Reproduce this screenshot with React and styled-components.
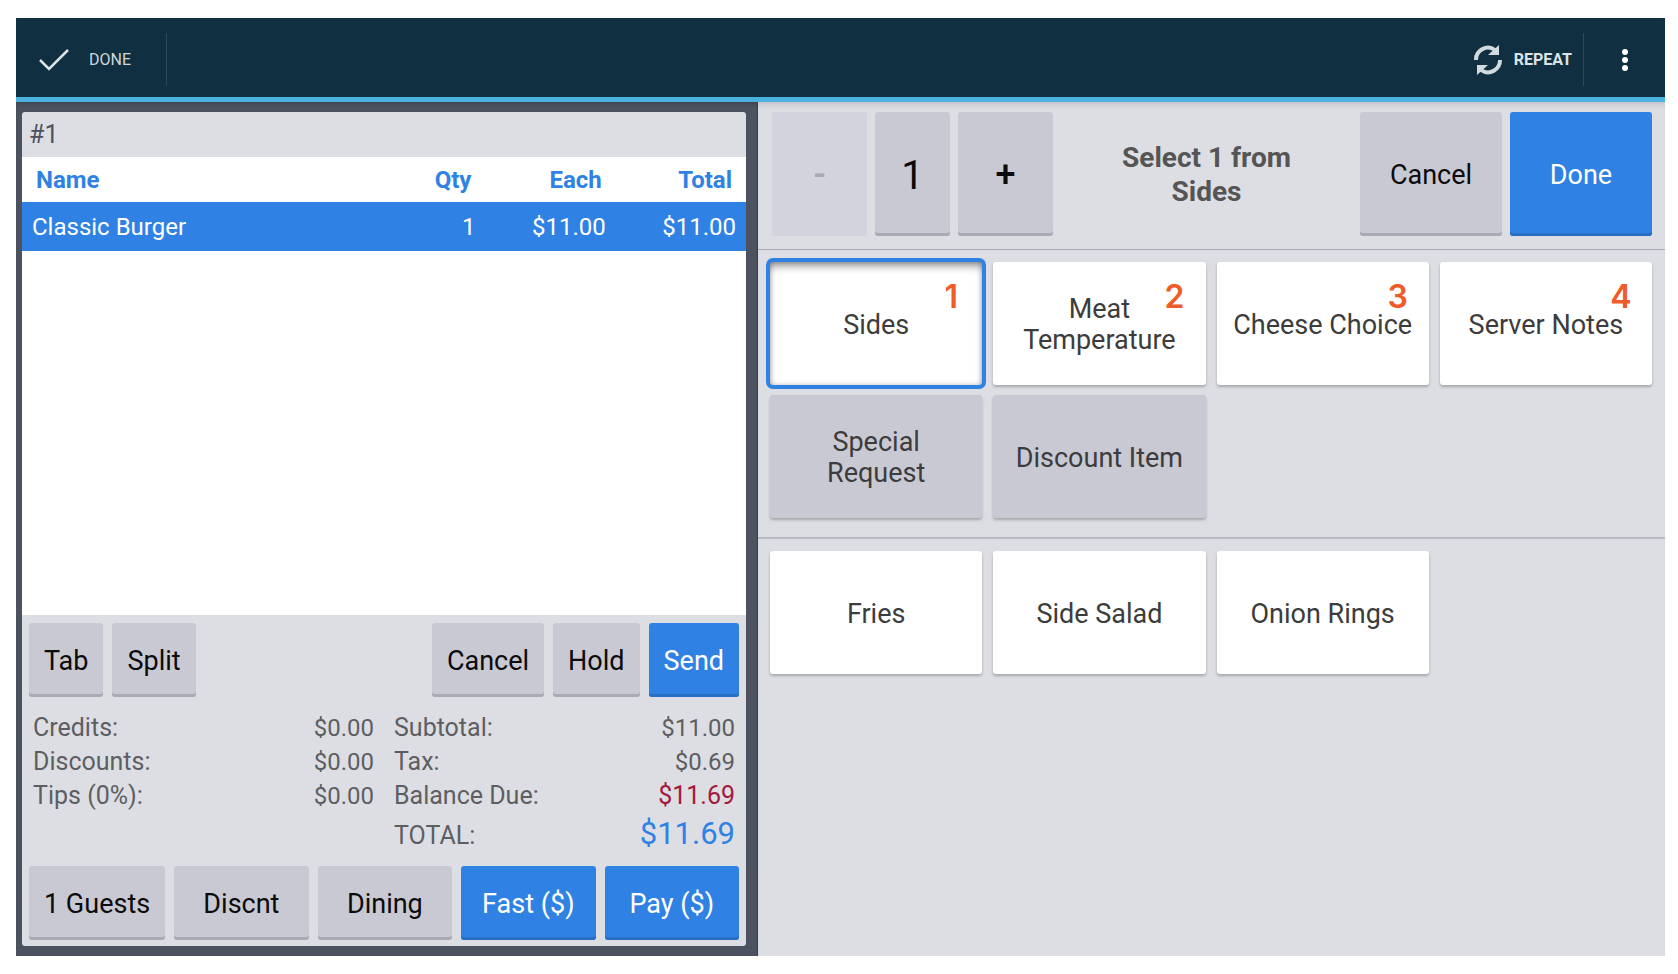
import React from 'react'
import styled, { createGlobalStyle, css } from 'styled-components'

const GlobalStyle = createGlobalStyle`
  * {
    box-sizing: border-box;
  }
  body {
    margin: 0;
    background: #fff;
    font-family: Roboto, "Liberation Sans", sans-serif;
  }
  button {
    font-family: inherit;
    border: none;
    padding: 0;
    cursor: pointer;
  }
`

const Screen = styled.div`
  display: flex;
  flex-direction: column;
  min-height: calc(100vh - 36px);
  margin: 18px 13px 18px 16px;
`

const TopBar = styled.header`
  display: flex;
  justify-content: space-between;
  align-items: center;
  height: 84px;
  padding-top: 4px;
  background: #102f40;
  border-bottom: 5px solid #4bb2e0;
`

const BarGroup = styled.div`
  display: flex;
  align-items: center;
`

const BarButton = styled.button`
  display: flex;
  align-items: center;
  gap: ${props => props.$gap}px;
  height: 53px;
  padding: ${props => props.$padding};
  background: none;
  color: ${props => props.$color};
  font-size: 16px;
  font-weight: ${props => (props.$strong ? 700 : 400)};
`

const BarDivider = styled.span`
  width: 1px;
  height: 53px;
  background: #2b4b5a;
`

const Columns = styled.div`
  flex: 1;
  display: grid;
  grid-template-columns: 45fr 55fr;
`

const TicketPane = styled.section`
  display: flex;
  padding: 10px 12px 10px 6px;
  background: #4d5260;
  box-shadow: inset 0 4px 4px -2px rgba(0, 0, 0, 0.2), inset -1px 0 0 #3c404c;
`

const Ticket = styled.div`
  flex: 1;
  display: flex;
  flex-direction: column;
  overflow: hidden;
  border-radius: 3px;
  background: #dddee3;
`

const TicketNumber = styled.h1`
  margin: 0;
  padding: 0 7px;
  font-size: 25px;
  font-weight: 400;
  line-height: 45px;
  color: #4d5260;
`

const Lines = styled.div`
  flex: 1;
  background: #fff;
`

const LineTable = styled.table`
  width: 100%;
  table-layout: fixed;
  border-collapse: collapse;
  font-size: 24px;
`

const HeadCell = styled.th`
  width: ${props => props.$width};
  height: 45px;
  padding: 1px 14px 0;
  text-align: ${props => props.$align || 'right'};
  font-weight: 700;
  color: #2f82e3;
`

const LineCell = styled.td`
  height: 49px;
  padding: 1px 10px 0;
  text-align: ${props => props.$align || 'right'};
  color: #fff;
  background: #2f82e3;
`

const Footer = styled.footer`
  padding: 8px 7px 6px;
`

const ButtonRow = styled.div`
  display: flex;
  gap: 9px;
`

const EqualRow = styled.div`
  display: grid;
  grid-template-columns: repeat(5, 1fr);
  gap: 9px;
`

const Spacer = styled.span`
  flex: 1;
`

const PosButton = styled.button`
  height: 74px;
  padding: 2px 15px 0;
  border-radius: 3px;
  font-size: 27px;
  white-space: nowrap;
  color: #0b0b0b;
  background: #c9c9d3;
  box-shadow: inset 0 -3px 0 #aaaab4;
  ${props => props.$primary && css`
    color: #fff;
    background: #2f82e3;
    box-shadow: inset 0 -3px 0 #2870c6;
  `}
`

const Summary = styled.div`
  display: grid;
  grid-template-columns: 1fr 1fr;
  gap: 20px;
  margin: 14px 4px 5px;
`

const SummaryList = styled.dl`
  margin: 0;
`

const SummaryLine = styled.div`
  display: flex;
  justify-content: space-between;
  align-items: baseline;
  height: 34px;
  font-size: 25px;
  line-height: 34px;
  color: #5d5e62;
`

const TotalLine = styled(SummaryLine)`
  height: 48px;
  line-height: 42px;
`

const Amount = styled.dd`
  margin: 0;
  color: ${props => props.$color || 'inherit'};
  font-size: ${props => props.$size || 24}px;
`

const OptionsPane = styled.main`
  background: #dddee3;
  box-shadow: inset 0 6px 6px -4px rgba(0, 0, 0, 0.15);
`

const OptionsHead = styled.div`
  display: flex;
  gap: 8px;
  padding: 10px 13px 13px 14px;
  border-bottom: 1px solid #a9aab3;
`

const HeadButton = styled(PosButton)`
  flex: none;
  width: ${props => props.$width}px;
  height: 124px;
  font-size: ${props => props.$size || 27}px;
  font-weight: ${props => (props.$strong ? 500 : 400)};
  &:disabled {
    color: #a9a9ae;
    background: #d3d3dd;
    box-shadow: none;
  }
`

const Prompt = styled.h2`
  flex: 1;
  align-self: center;
  margin: 0;
  padding: 2px 48px 0;
  text-align: center;
  font-size: 28px;
  font-weight: 700;
  line-height: 34px;
  color: #555;
`

const TileGrid = styled.div`
  display: grid;
  grid-template-columns: repeat(4, 1fr);
  gap: 10px 11px;
  padding: 12px 13px 19px 12px;
  border-bottom: ${props => (props.$divided ? '2px solid #b9bac4' : 'none')};
`

const Tile = styled.button`
  position: relative;
  height: 123px;
  padding: 3px 16px 0;
  border-radius: 3px;
  font-size: 27px;
  line-height: 31px;
  color: #3c3c3c;
  background: ${props => (props.$muted ? '#c9c9d3' : '#fff')};
  box-shadow: 0 2px 3px rgba(0, 0, 0, 0.25);
  ${props => props.$selected && css`
    box-shadow: 0 0 0 4px #2f82e3, inset 0 6px 8px -2px rgba(0, 0, 0, 0.4),
      inset 0 0 5px rgba(0, 0, 0, 0.25);
  `}
`

const Step = styled.span`
  position: absolute;
  top: 23px;
  right: 20px;
  width: 22px;
  text-align: center;
  font-family: Inter, Roboto, sans-serif;
  font-size: 32px;
  font-weight: 600;
  line-height: 24px;
  color: #f15a29;
`

const CheckIcon = () => (
  <svg width="30" height="24" viewBox="0 0 30 24" fill="none" stroke="#dde3e6" strokeWidth="2.5">
    <path d="M1 12 L10 21 L29 2" />
  </svg>
)

const RepeatIcon = () => (
  <svg width="30" height="32" viewBox="0 0 30 32">
    <g id="half">
      <path d="M3 16 A12 12 0 0 1 22 6" fill="none" stroke="#d3dadd" strokeWidth="4" />
      <path d="M26 1 V11 H15 Z" fill="#d3dadd" />
    </g>
    <use href="#half" transform="rotate(180 15 16)" />
  </svg>
)

const MoreIcon = () => (
  <svg width="6" height="22" viewBox="0 0 6 22" fill="#fff">
    <circle cx="3" cy="3" r="3" />
    <circle cx="3" cy="11" r="3" />
    <circle cx="3" cy="19" r="3" />
  </svg>
)

const lines = [
  { name: 'Classic Burger', qty: 1, each: '$11.00', total: '$11.00' }
]

const groups = [
  { label: 'Sides', step: 1, selected: true },
  { label: 'Meat Temperature', step: 2 },
  { label: 'Cheese Choice', step: 3 },
  { label: 'Server Notes', step: 4 },
  { label: 'Special Request', muted: true },
  { label: 'Discount Item', muted: true }
]

const choices = [{ label: 'Fries' }, { label: 'Side Salad' }, { label: 'Onion Rings' }]

const renderTile = ({ label, step, selected, muted }) => (
  <Tile key={label} type="button" $selected={selected} $muted={muted}>
    {label}
    {step && <Step>{step}</Step>}
  </Tile>
)

const SummaryItem = ({ label, value, color, size }) => (
  <SummaryLine>
    <dt>{label}</dt>
    <Amount $color={color} $size={size}>{value}</Amount>
  </SummaryLine>
)

const App = () => (
  <>
    <GlobalStyle />
    <Screen>
      <TopBar>
        <BarGroup>
          <BarButton type="button" $gap={20} $padding="0 35px 0 23px" $color="#cfd7da">
            <CheckIcon />
            DONE
          </BarButton>
          <BarDivider />
        </BarGroup>
        <BarGroup>
          <BarButton type="button" $gap={11} $padding="0 11px 0 0" $color="#dde3e6" $strong>
            <RepeatIcon />
            REPEAT
          </BarButton>
          <BarDivider />
          <BarButton type="button" aria-label="More options" $padding="0 37px 0 38px">
            <MoreIcon />
          </BarButton>
        </BarGroup>
      </TopBar>
      <Columns>
        <TicketPane>
          <Ticket>
            <TicketNumber>#1</TicketNumber>
            <Lines>
              <LineTable>
                <thead>
                  <tr>
                    <HeadCell $align="left">Name</HeadCell>
                    <HeadCell $width="18%">Qty</HeadCell>
                    <HeadCell $width="18%">Each</HeadCell>
                    <HeadCell $width="18%">Total</HeadCell>
                  </tr>
                </thead>
                <tbody>
                  {lines.map(line => (
                    <tr key={line.name}>
                      <LineCell $align="left">{line.name}</LineCell>
                      <LineCell>{line.qty}</LineCell>
                      <LineCell>{line.each}</LineCell>
                      <LineCell>{line.total}</LineCell>
                    </tr>
                  ))}
                </tbody>
              </LineTable>
            </Lines>
            <Footer>
              <ButtonRow>
                <PosButton type="button">Tab</PosButton>
                <PosButton type="button">Split</PosButton>
                <Spacer />
                <PosButton type="button">Cancel</PosButton>
                <PosButton type="button">Hold</PosButton>
                <PosButton type="button" $primary>Send</PosButton>
              </ButtonRow>
              <Summary>
                <SummaryList>
                  <SummaryItem label="Credits:" value="$0.00" />
                  <SummaryItem label="Discounts:" value="$0.00" />
                  <SummaryItem label="Tips (0%):" value="$0.00" />
                </SummaryList>
                <SummaryList>
                  <SummaryItem label="Subtotal:" value="$11.00" />
                  <SummaryItem label="Tax:" value="$0.69" />
                  <SummaryItem label="Balance Due:" value="$11.69" color="#a3193d" size={25} />
                  <TotalLine>
                    <dt>TOTAL:</dt>
                    <Amount $size={31} $color="#2f82e3">$11.69</Amount>
                  </TotalLine>
                </SummaryList>
              </Summary>
              <EqualRow>
                <PosButton type="button">1 Guests</PosButton>
                <PosButton type="button">Discnt</PosButton>
                <PosButton type="button">Dining</PosButton>
                <PosButton type="button" $primary>Fast ($)</PosButton>
                <PosButton type="button" $primary>Pay ($)</PosButton>
              </EqualRow>
            </Footer>
          </Ticket>
        </TicketPane>
        <OptionsPane>
          <OptionsHead>
            <HeadButton type="button" $width={95} $size={36} $strong disabled>-</HeadButton>
            <HeadButton type="button" $width={75} $size={40}>1</HeadButton>
            <HeadButton type="button" $width={95} $size={36} $strong>+</HeadButton>
            <Prompt>Select 1 from Sides</Prompt>
            <HeadButton type="button" $width={142}>Cancel</HeadButton>
            <HeadButton type="button" $width={142} $primary>Done</HeadButton>
          </OptionsHead>
          <TileGrid $divided>{groups.map(renderTile)}</TileGrid>
          <TileGrid>{choices.map(renderTile)}</TileGrid>
        </OptionsPane>
      </Columns>
    </Screen>
  </>
)

export default App
